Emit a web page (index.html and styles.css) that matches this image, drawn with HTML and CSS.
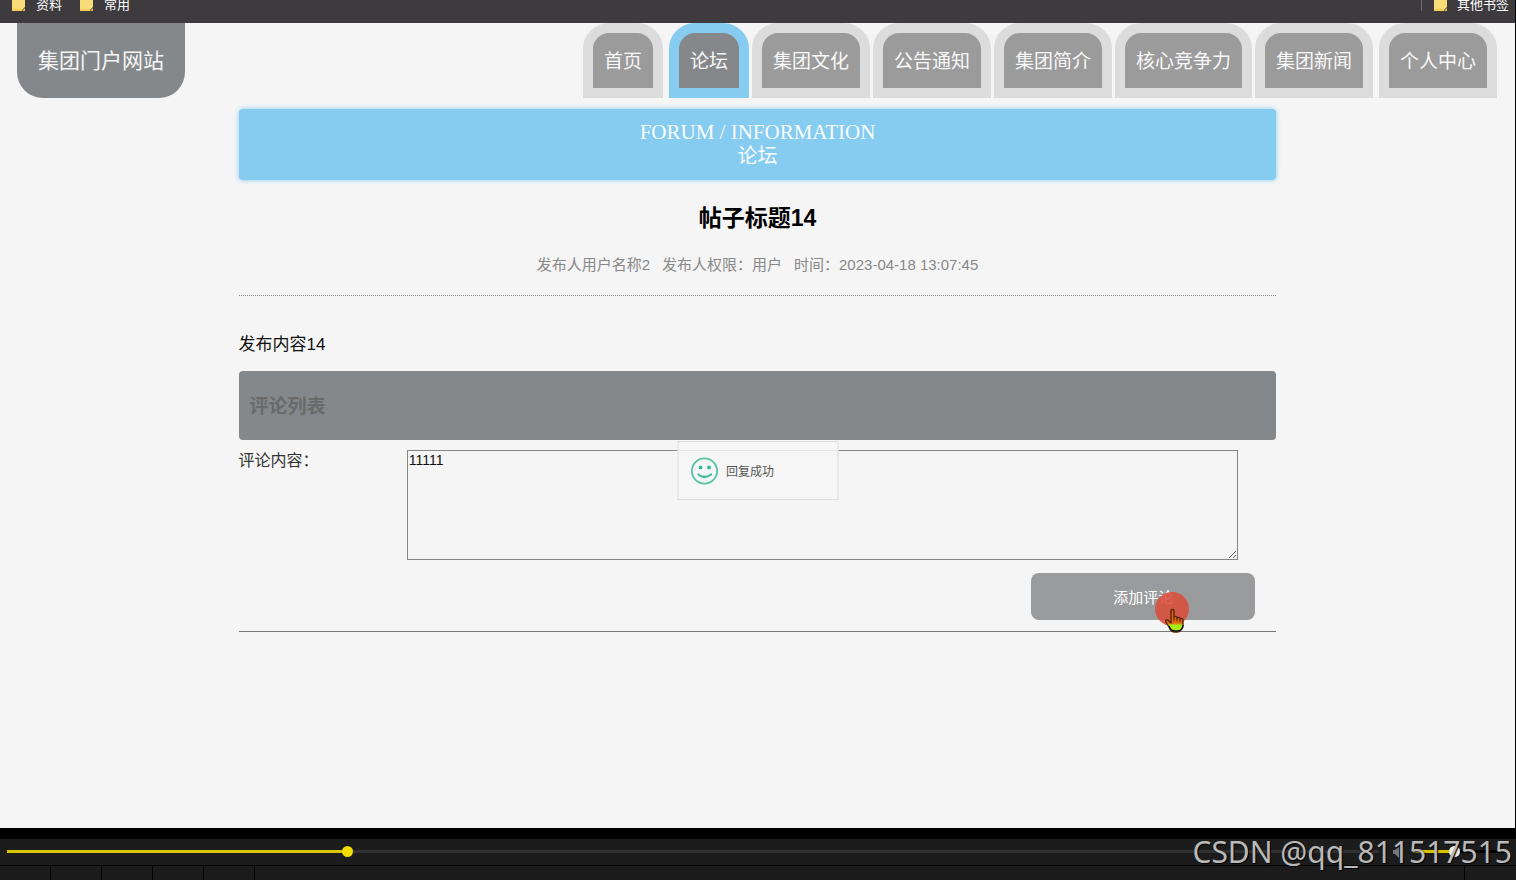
FILE: index.html
```html
<!DOCTYPE html>
<html lang="zh-CN">

<head>
    <meta charset="UTF-8">
    <meta name="viewport" content="width=device-width, initial-scale=1.0">
    <title>集团门户网站</title>
    <link rel="stylesheet" href="styles.css">
</head>

<body>
    <div class="screen">
        <!-- Bookmarks -->
        <div class="bookmarks">
            <a href="#"><svg class="folder" viewBox="0 0 13 11"><path d="M0 0H13V7L9 11H0Z" fill="#f8dc78"/><path d="M13 8V11H10Z" fill="#f0bd45"/><path d="M0 9H10V11H0Z" fill="#f3cc5c"/></svg>资料</a>
            <a href="#"><svg class="folder" viewBox="0 0 13 11"><path d="M0 0H13V7L9 11H0Z" fill="#f8dc78"/><path d="M13 8V11H10Z" fill="#f0bd45"/><path d="M0 9H10V11H0Z" fill="#f3cc5c"/></svg>常用</a>
            <a href="#" class="other"><svg class="folder" viewBox="0 0 13 11"><path d="M0 0H13V7L9 11H0Z" fill="#f8dc78"/><path d="M13 8V11H10Z" fill="#f0bd45"/><path d="M0 9H10V11H0Z" fill="#f3cc5c"/></svg>其他书签</a>
        </div>

        <div class="site">
            <header class="header">
                <a href="#" class="logo">集团门户网站</a>
                <nav class="nav">
                    <a href="#" class="home">首页</a>
                    <a href="#" class="active">论坛</a>
                    <a href="#">集团文化</a>
                    <a href="#">公告通知</a>
                    <a href="#">集团简介</a>
                    <a href="#">核心竞争力</a>
                    <a href="#">集团新闻</a>
                    <a href="#" class="user">个人中心</a>
                </nav>
            </header>

            <main class="container">
                <div class="banner">
                    <div class="banner-en">FORUM / INFORMATION</div>
                    <div>论坛</div>
                </div>

                <h1 class="title">帖子标题14</h1>
                <div class="meta">
                    <span>发布人用户名称2</span>
                    <span>发布人权限：用户</span>
                    <span>时间：2023-04-18 13:07:45</span>
                </div>
                <div class="content">发布内容14</div>

                <h2 class="comment-title">评论列表</h2>
                <form class="comment-form">
                    <div class="row">
                        <label for="comment">评论内容：</label>
                        <textarea id="comment">11111</textarea>
                    </div>
                    <div class="submit">
                        <button type="button">添加评论</button>
                        <!-- Mouse pointer with click highlight -->
                        <svg class="pointer" viewBox="0 0 36 42">
                            <defs>
                                <linearGradient id="hand" x1="0" y1="0" x2="0" y2="1">
                                    <stop offset="0.6" stop-color="#e0650c"/>
                                    <stop offset="0.7" stop-color="#a8ee12"/>
                                </linearGradient>
                            </defs>
                            <circle cx="18" cy="18" r="17" fill="#db4c38" fill-opacity="0.85"/>
                            <path d="M17 20c0-2 3-2 3 0v6c1-1 3-1 3 1 1-1 3-1 3 1 1-1 3-1 3 1v5c0 4-3 7-6 7h-2c-3 0-5-2-6-5l-3-5c-1-2 1-3 3-1l2 2z" fill="url(#hand)" stroke="#5a240a" stroke-width="1.4" stroke-linejoin="round"/>
                            <path d="M20 26v4M23 27v3M26 28v3" fill="none" stroke="#5a240a" stroke-width="1"/>
                            <path d="M15 35c1 3 3 5 6 5h2c4 0 6-3 6-6" fill="none" stroke="#111" stroke-width="1.4"/>
                        </svg>
                    </div>
                </form>
            </main>

            <div class="toast">
                <svg class="smile" viewBox="0 0 28 28">
                    <circle cx="14" cy="14" r="12.6" fill="none" stroke="#55c3a2" stroke-width="1.8"/>
                    <circle cx="10" cy="10.5" r="2" fill="#3dba95"/>
                    <circle cx="18.5" cy="10.5" r="2" fill="#3dba95"/>
                    <path d="M8 17.5Q14 22.5 20.5 17.5" fill="none" stroke="#3dba95" stroke-width="2.2" stroke-linecap="round"/>
                </svg>
                <span>回复成功</span>
            </div>
        </div>
    </div>

    <!-- Video player -->
    <footer class="player">
        <div class="timeline">
            <input type="range" class="seek" min="0" max="1000" value="246" aria-label="进度">
            <svg class="speaker" viewBox="0 0 12 12"><path d="M0 4H2L6 0V12L2 8H0Z" fill="#777"/><path d="M8 3V9M10.500 1.500V10.500" stroke="#444" fill="none"/></svg>
            <input type="range" class="volume" min="0" max="100" value="42" aria-label="音量">
        </div>
        <div class="controls">
            <button type="button" aria-label="播放"></button>
            <button type="button" aria-label="停止"></button>
            <button type="button" aria-label="上一个"></button>
            <button type="button" aria-label="下一个"></button>
            <button type="button" aria-label="打开"></button>
            <button type="button" class="full" aria-label="全屏"></button>
        </div>
        <div class="watermark">CSDN @qq_811517515</div>
    </footer>
</body>

</html>
```

FILE: styles.css
```css
* {
    box-sizing: border-box;
}

body {
    display: flex;
    flex-direction: column;
    min-height: 100vh;
    margin: 0;
    background-color: #000;
    color: #111;
    font-family: "Liberation Sans", "Noto Sans CJK SC", sans-serif;
}

a {
    color: inherit;
    text-decoration: none;
}

.screen {
    flex: 1;
    display: flex;
    flex-direction: column;
    margin: 0 1px 11px 0;
    background-color: #f5f5f5;
}

/* Bookmarks */
.bookmarks {
    display: flex;
    gap: 18px;
    height: 23px;
    padding: 0 6px 0 12px;
    overflow: hidden;
    background-color: #3d3b3e;
    color: #fff;
    font-size: 13px;
    line-height: 10px;
}

.bookmarks a {
    display: flex;
    gap: 11px;
    height: 11px;
}

.bookmarks .other {
    margin-left: auto;
    padding-left: 12px;
    border-left: 1px solid #6b696c;
    gap: 10px;
}

.folder {
    width: 13px;
    height: 11px;
}

/* Header */
.site {
    position: relative;
    flex: 1;
}

.header {
    display: flex;
    justify-content: space-between;
    padding: 0 18px 0 17px;
}

.logo {
    height: 75px;
    padding: 0 21px;
    border-radius: 0 0 26px 26px;
    background-color: #84888b;
    color: #f5f5f5;
    font-size: 21px;
    line-height: 76px;
}

.nav {
    display: flex;
    gap: 3px;
}

.nav a {
    height: 75px;
    padding: 0 11px;
    border: 10px solid #dcdcdc;
    border-radius: 26px 26px 0 0;
    background-color: #9b9b9b;
    color: #f8f8f8;
    font-size: 19px;
    line-height: 58px;
}

.nav .active {
    border-color: #86ccf1;
    background-color: #85878a;
}

.nav .home {
    margin-right: 3px;
}

.nav .user {
    margin-left: 3px;
}

/* Post */
.container {
    width: 68.5%;
    margin: 11px auto 0;
}

.banner {
    padding: 11px 0 12px;
    border-radius: 4px;
    background-color: #86cbf0;
    box-shadow: 0 0 5px #86cbf0;
    color: #f8fcff;
    font-family: "Liberation Serif", "Noto Sans CJK SC", serif;
    font-size: 20px;
    line-height: 24px;
    text-align: center;
}

.banner-en {
    font-size: 21px;
}

.title {
    margin: 22px 0 0;
    color: #000;
    font-size: 23px;
    line-height: 32px;
    text-align: center;
}

.meta {
    display: flex;
    justify-content: center;
    gap: 12px;
    padding: 20px 0 19px;
    border-bottom: 1px dotted #888;
    color: #888;
    font-size: 15px;
    line-height: 22px;
}

.content {
    padding: 37px 0 14px;
    font-size: 17px;
    line-height: 24px;
}

.comment-title {
    margin: 0;
    padding: 2px 11px 0;
    border-radius: 4px;
    background-color: #84888a;
    color: #6a6a6a;
    font-size: 19px;
    line-height: 67px;
}

.comment-form {
    padding-top: 10px;
    border-bottom: 1px solid #777;
}

.row {
    display: grid;
    grid-template-columns: 16.2% 80.1%;
}

.row label {
    color: #333;
    font-size: 16px;
    line-height: 22px;
}

.row textarea {
    height: 110px;
    padding: 1px;
    border: 1px solid #858585;
    background-color: transparent;
    color: #111;
    font-family: inherit;
    font-size: 14px;
}

.submit {
    position: relative;
    display: flex;
    justify-content: flex-end;
    padding: 13px 21px 11px 0;
}

.submit button {
    width: 224px;
    height: 47px;
    border: none;
    border-radius: 8px;
    background-color: #999b9d;
    color: #fff;
    font-family: inherit;
    font-size: 15px;
}

.pointer {
    position: absolute;
    top: 31px;
    right: 86px;
    width: 36px;
    height: 42px;
}

/* Message box */
.toast {
    position: absolute;
    top: 418px;
    left: 50%;
    display: flex;
    align-items: center;
    gap: 8px;
    width: 161px;
    height: 59px;
    padding: 0 12px;
    transform: translateX(-50%);
    border: 1px solid #ddd;
    background-color: rgba(246, 246, 246, 0.85);
    color: #555;
    font-size: 12px;
}

.smile {
    width: 28px;
    height: 28px;
}

/* Player */
.player {
    position: relative;
    background-color: #1c1c1c;
}

.timeline {
    display: flex;
    align-items: center;
    height: 27px;
    padding: 0 7px 1px;
    border-bottom: 1px solid #000;
}

.timeline input {
    height: 11px;
    margin: 0;
    appearance: none;
    background: none;
}

.seek {
    flex: 1;
}

.seek::-webkit-slider-runnable-track {
    height: 3px;
    background: linear-gradient(to right, #d8c300 25%, #303030 25%);
}

.volume {
    width: 96px;
}

.volume::-webkit-slider-runnable-track {
    height: 3px;
    background: linear-gradient(to right, #d8c300 42%, #000 42%);
}

.timeline input::-webkit-slider-thumb {
    width: 11px;
    height: 11px;
    margin-top: -4px;
    appearance: none;
    border-radius: 50%;
    background-color: #f5dc00;
}

.timeline .volume::-webkit-slider-thumb {
    background-color: #eee;
}

.speaker {
    width: 12px;
    height: 12px;
    margin: 0 8px 0 14px;
}

.controls {
    display: flex;
    height: 14px;
}

.controls button {
    width: 51px;
    padding: 0;
    border: none;
    border-right: 1px solid #000;
    background-color: #1c1c1c;
}

.controls .full {
    width: 52px;
    margin-left: auto;
    border-right: none;
    border-left: 1px solid #000;
}

.watermark {
    position: absolute;
    right: 4px;
    bottom: 8px;
    color: #b9b9b9;
    font-family: "Noto Sans", sans-serif;
    font-size: 30px;
    line-height: 40px;
    text-shadow: 1px 1px 1px #000;
}
```
